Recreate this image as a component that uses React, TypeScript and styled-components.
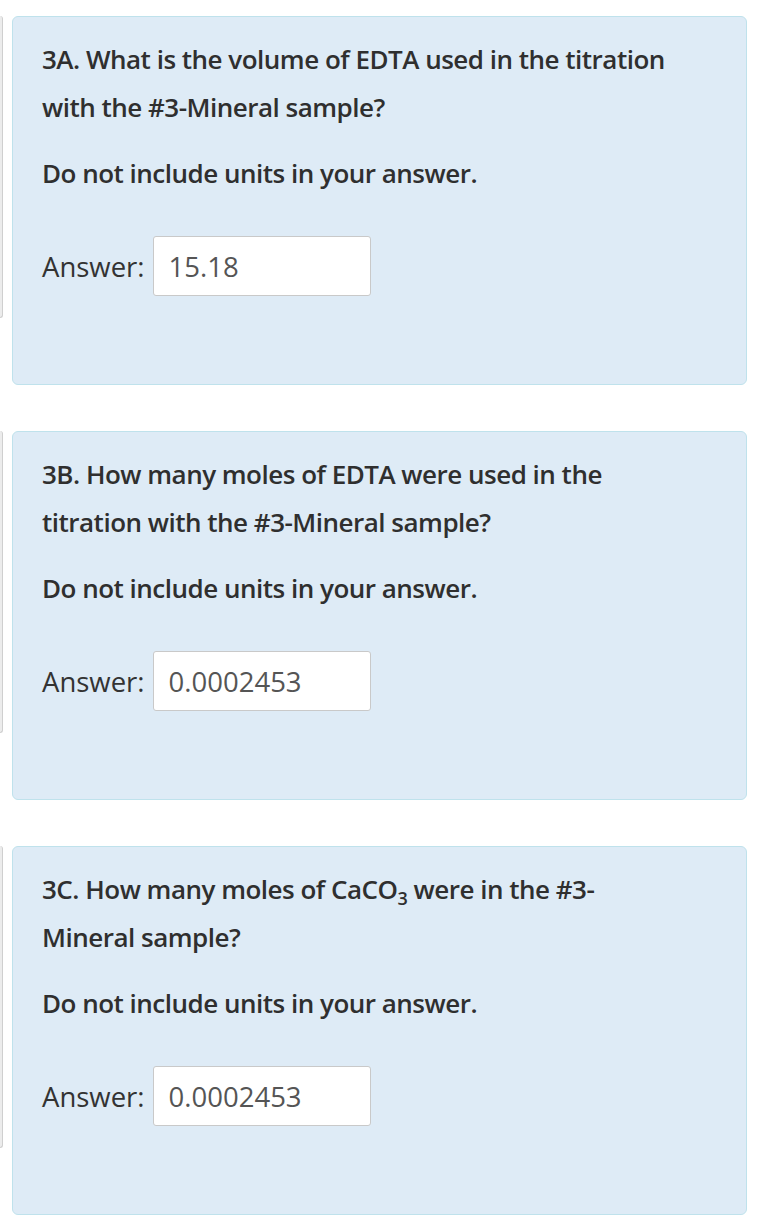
import type { ReactNode } from 'react';
import styled, { createGlobalStyle } from 'styled-components';

const GlobalStyle = createGlobalStyle`
  body {
    margin: 0;
    background: #ffffff;
    font-family: "Open Sans", "Noto Sans", sans-serif;
    color: #333333;
  }
`;

const Page = styled.div`
  display: flex;
  flex-direction: column;
  gap: 46px;
  padding: 16px 17px 0 0;
`;

const QuestionRow = styled.div`
  display: flex;
  align-items: flex-start;
  gap: 9px;
`;

const InfoEdge = styled.div`
  flex: 0 0 3px;
  height: 302px;
  box-sizing: border-box;
  background: #ececec;
  border-right: 1px solid #cfcfcf;
  border-bottom: 1px solid #cfcfcf;
  border-radius: 0 3px 3px 0;
`;

const Formulation = styled.div`
  flex: 1;
  box-sizing: border-box;
  min-height: 369px;
  background: #deebf6;
  border: 1px solid #bfe2ec;
  border-radius: 6px;
  padding: 18px 70px 0 29px;
`;

const QText = styled.p`
  margin: 0 0 18px;
  font-size: 26px;
  line-height: 48px;
  font-weight: 600;
  color: #2f2f2f;
  letter-spacing: -0.5px;
`;

const Sub = styled.sub`
  font-size: 18px;
  line-height: 0;
  vertical-align: -6px;
`;

const AnswerRow = styled.div`
  display: flex;
  align-items: center;
  gap: 8px;
  margin-top: 39px;
`;

const AnswerLabel = styled.label`
  font-size: 27.5px;
  color: #333333;
`;

const AnswerInput = styled.input`
  width: 218px;
  height: 60px;
  box-sizing: border-box;
  border: 1px solid #c9c9c9;
  border-radius: 3px;
  background: #ffffff;
  padding: 0 15px;
  font-family: "Open Sans", "Noto Sans", sans-serif;
  font-size: 27.5px;
  color: #555555;
  outline: none;
`;

type Question = {
  id: string;
  text: ReactNode;
  answer: string;
};

const questions: Question[] = [
  {
    id: '3A',
    text: '3A. What is the volume of EDTA used in the titration with the #3-Mineral sample?',
    answer: '15.18',
  },
  {
    id: '3B',
    text: '3B. How many moles of EDTA were used in the titration with the #3-Mineral sample?',
    answer: '0.0002453',
  },
  {
    id: '3C',
    text: (
      <>
        3C. How many moles of CaCO<Sub>3</Sub> were in the #3-Mineral sample?
      </>
    ),
    answer: '0.0002453',
  },
];

function App() {
  return (
    <>
      <GlobalStyle />
      <Page>
        {questions.map((q) => (
          <QuestionRow key={q.id}>
            <InfoEdge />
            <Formulation>
              <QText>{q.text}</QText>
              <QText>Do not include units in your answer.</QText>
              <AnswerRow>
                <AnswerLabel>Answer:</AnswerLabel>
                <AnswerInput readOnly value={q.answer} />
              </AnswerRow>
            </Formulation>
          </QuestionRow>
        ))}
      </Page>
    </>
  );
}

export default App;
